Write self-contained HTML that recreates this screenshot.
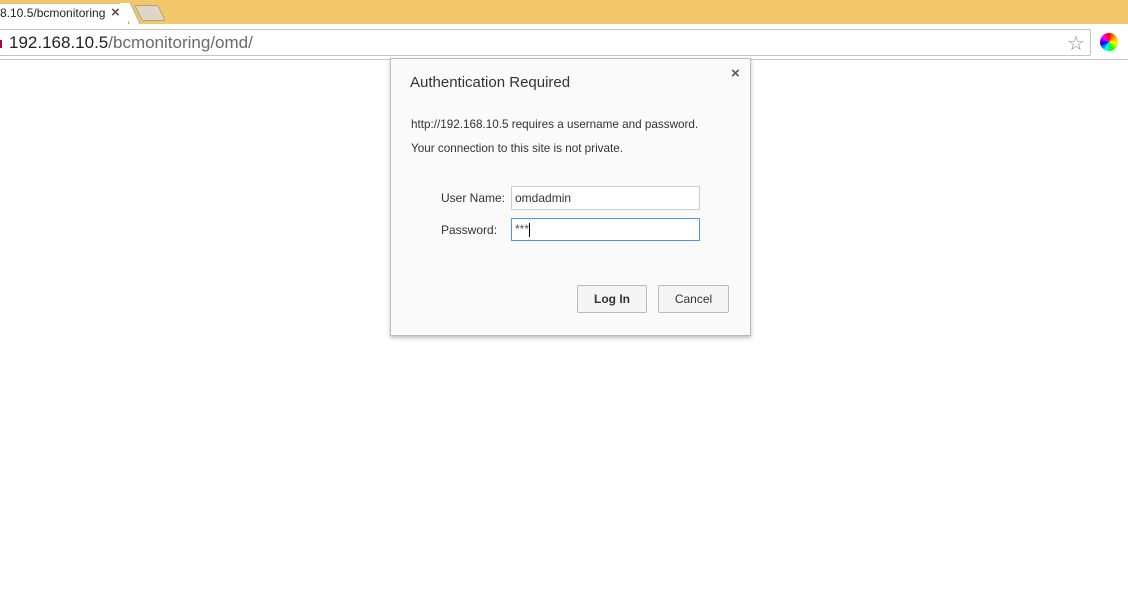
<!DOCTYPE html>
<html><head><style>
body{margin:0;width:1128px;height:592px;background:#fff;position:relative;overflow:hidden;font-family:"Liberation Sans",sans-serif;}
.abs{position:absolute}
</style></head><body>
<div class="abs" style="left:0;top:0;width:1128px;height:24px;background:#f2c76a;"></div>
<div class="abs" style="left:0;top:3px;width:128px;height:22px;background:#fff;border-right:1px solid #b9a26a;border-top:1px solid #d8c28a;"></div>
<div class="abs" style="left:125px;top:3px;width:10px;height:22px;background:#fff;transform:skewX(25deg);border-right:1px solid #b9a26a;"></div>
<div class="abs" style="left:0;top:6px;font-size:12px;color:#222;white-space:nowrap;width:106px;overflow:hidden;">8.10.5/bcmonitoring</div>
<div class="abs" style="left:111px;top:4px;font-size:15px;color:#555;font-weight:bold;">×</div>
<div class="abs" style="left:138px;top:5px;width:22px;height:14px;background:#ddd7c6;border:1px solid #a89f8a;transform:skewX(25deg);border-radius:2px;"></div>
<div class="abs" style="left:0;top:24px;width:1128px;height:35px;background:#fff;border-bottom:1px solid #c7c7c7;"></div>
<div class="abs" style="left:-2px;top:29px;width:1091px;height:25px;border:1px solid #c4c4c4;border-radius:2px;"></div>
<div class="abs" style="left:0;top:40px;width:2px;height:8px;background:#a05;"></div>
<div class="abs" style="left:9px;top:33px;font-size:17px;color:#222;white-space:nowrap;">192.168.10.5<span style="color:#6a6a6a">/bcmonitoring/omd/</span></div>
<div class="abs" style="left:1067px;top:31px;font-size:20px;color:#888;">☆</div>
<div class="abs" style="left:1100px;top:33px;width:18px;height:18px;border-radius:50%;background:conic-gradient(red,orange,yellow,lime,cyan,blue,magenta,red);"></div>
<div class="abs" style="left:390px;top:58px;width:359px;height:276px;background:#fafafa;border:1px solid #bcbcbc;box-shadow:0 2px 4px rgba(0,0,0,.25);color:#333;">
 <div class="abs" style="left:19px;top:15px;font-size:15px;color:#333;">Authentication Required</div>
 <div class="abs" style="left:340px;top:6px;font-size:15px;font-weight:bold;color:#555;">×</div>
 <div class="abs" style="left:20px;top:59px;font-size:11.7px;">http://192.168.10.5 requires a username and password.</div>
 <div class="abs" style="left:20px;top:83px;font-size:11.7px;">Your connection to this site is not private.</div>
 <div class="abs" style="left:50px;top:132px;font-size:12px;">User Name:</div>
 <div class="abs" style="left:120px;top:127px;width:184px;height:22px;border:1px solid #ccc;background:#fff;font-size:12px;line-height:22px;padding-left:3px;">omdadmin</div>
 <div class="abs" style="left:50px;top:164px;font-size:12px;">Password:</div>
 <div class="abs" style="left:120px;top:159px;width:184px;height:21px;border:1px solid #4d90fe;background:#fff;font-size:12px;line-height:20px;padding-left:3px;color:#555;">***<span style="display:inline-block;width:1px;height:14px;background:#000;vertical-align:middle;"></span></div>
 <div class="abs" style="left:186px;top:226px;width:68px;height:26px;border:1px solid #bbb;border-radius:2px;background:#f5f5f5;font-size:12px;font-weight:bold;text-align:center;line-height:26px;">Log In</div>
 <div class="abs" style="left:267px;top:226px;width:69px;height:26px;border:1px solid #bbb;border-radius:2px;background:#f5f5f5;font-size:12px;text-align:center;line-height:26px;">Cancel</div>
</div>
</body></html>
